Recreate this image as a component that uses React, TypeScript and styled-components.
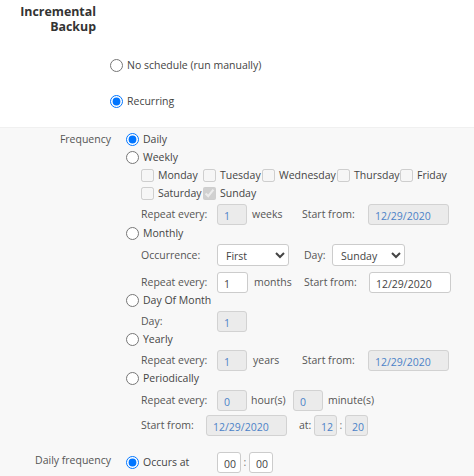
import styled, { createGlobalStyle } from "styled-components";

const GlobalStyle = createGlobalStyle`
  html, body {
    margin: 0;
    padding: 0;
    background: #ffffff;
  }
  body {
    font-family: "Open Sans", "Liberation Sans", sans-serif;
    font-size: 10.5px;
    color: #444444;
  }
`;

const Page = styled.div`
  width: 474px;
  height: 476px;
  overflow: hidden;
  display: flex;
  flex-direction: column;
`;

const TopSection = styled.div`
  height: 127px;
  display: flex;
  flex-direction: column;
`;

const Title = styled.div`
  width: 96px;
  padding-top: 4px;
  display: flex;
  flex-direction: column;
  align-items: flex-end;
  font-size: 12.4px;
  font-weight: 700;
  color: #333333;
`;

const TitleLine = styled.span`
  display: block;
  height: 15px;
  line-height: 15px;
`;

const TopOptions = styled.div`
  display: flex;
  flex-direction: column;
  gap: 18px;
  padding: 22px 0 0 110px;
`;

const GreySection = styled.div`
  flex: 1;
  background: #f8f8f8;
  border-top: 1px solid #f0f0f0;
  padding-top: 2px;
`;

const Grid = styled.div`
  display: grid;
  grid-template-columns: 111px 1fr;
  column-gap: 15px;
`;

const SideLabel = styled.div<{ $top?: number }>`
  text-align: right;
  color: #555555;
  line-height: 18px;
  margin-top: ${({ $top }) => $top ?? 0}px;
`;

const Column = styled.div<{ $top?: number }>`
  display: flex;
  flex-direction: column;
  margin-top: ${({ $top }) => $top ?? 0}px;
`;

const OptionRow = styled.label<{ $top?: number; $w?: number }>`
  display: flex;
  align-items: center;
  flex: none;
  height: 18px;
  gap: 4px;
  width: ${({ $w }) => ($w ? `${$w}px` : "auto")};
  margin-top: ${({ $top }) => $top ?? 0}px;
  white-space: nowrap;
`;

const Radio = styled.input.attrs({ type: "radio" })`
  width: 13px;
  height: 13px;
  margin: 0;
  accent-color: #0075ff;
`;

const DaysRow = styled.div`
  display: flex;
  align-items: center;
  height: 18px;
  padding-left: 15px;
`;

const DayItem = styled.label<{ $w: number }>`
  display: flex;
  align-items: center;
  gap: 4px;
  width: ${({ $w }) => $w}px;
  white-space: nowrap;
`;

const Check = styled.input.attrs({ type: "checkbox" })`
  width: 13px;
  height: 13px;
  margin: 0;
`;

const FieldRow = styled.div<{ $top?: number; $indent?: number }>`
  display: flex;
  align-items: center;
  height: 22px;
  padding-left: ${({ $indent }) => $indent ?? 15}px;
  margin-top: ${({ $top }) => $top ?? 0}px;
  white-space: nowrap;
`;

const Text = styled.span<{ $w?: number; $pad?: number }>`
  flex: none;
  box-sizing: border-box;
  width: ${({ $w }) => ($w ? `${$w}px` : "auto")};
  padding-left: ${({ $pad }) => $pad ?? 0}px;
  color: #555555;
`;

const Box = styled.input<{ $w: number }>`
  flex: none;
  box-sizing: border-box;
  width: ${({ $w }) => $w}px;
  height: 21px;
  margin: 0;
  padding: 3px 0 0 6px;
  font-family: inherit;
  font-size: 10.5px;
  color: #444444;
  background: #ffffff;
  border: 1px solid #cccccc;
  border-radius: 3px;
  outline: none;

  &:disabled {
    background: #ebebeb;
    color: #4b82c8;
    border-color: #d2d2d2;
  }
`;

const Select = styled.select<{ $w: number }>`
  flex: none;
  box-sizing: border-box;
  width: ${({ $w }) => $w}px;
  height: 22px;
  margin: 0;
  padding: 2px 4px 0 4px;
  font-family: inherit;
  font-size: 10.5px;
  color: #444444;
  background: #ffffff;
  border: 1px solid #cccccc;
  border-radius: 3px;
`;

const Colon = styled.span`
  flex: none;
  width: 8px;
  text-align: center;
  color: #777777;
`;

const weekDays: [string, number][] = [
  ["Monday", 62],
  ["Tuesday", 59],
  ["Wednesday", 75],
  ["Thursday", 63],
  ["Friday", 50],
];

export default function App() {
  return (
    <Page>
      <GlobalStyle />
      <TopSection>
        <Title>
          <TitleLine>Incremental</TitleLine>
          <TitleLine>Backup</TitleLine>
        </Title>
        <TopOptions>
          <OptionRow>
            <Radio name="mode" />
            No schedule (run manually)
          </OptionRow>
          <OptionRow>
            <Radio name="mode" defaultChecked />
            Recurring
          </OptionRow>
        </TopOptions>
      </TopSection>

      <GreySection>
        <Grid>
          <SideLabel>Frequency</SideLabel>
          <Column>
            <OptionRow>
              <Radio name="freq" defaultChecked />
              Daily
            </OptionRow>
            <OptionRow>
              <Radio name="freq" />
              Weekly
            </OptionRow>
            <DaysRow>
              {weekDays.map(([d, w]) => (
                <DayItem key={d} $w={w}>
                  <Check disabled />
                  {d}
                </DayItem>
              ))}
            </DaysRow>
            <DaysRow>
              <DayItem $w={62}>
                <Check disabled />
                Saturday
              </DayItem>
              <DayItem $w={59}>
                <Check disabled defaultChecked />
                Sunday
              </DayItem>
            </DaysRow>
            <FieldRow $top={1}>
              <Text $w={76}>Repeat every:</Text>
              <Box $w={30} disabled defaultValue="1" />
              <Text $w={55} $pad={5}>weeks</Text>
              <Text $w={66}>Start from:</Text>
              <Box $w={81} disabled defaultValue="12/29/2020" />
            </FieldRow>
            <OptionRow $top={-1}>
              <Radio name="freq" />
              Monthly
            </OptionRow>
            <FieldRow $top={2}>
              <Text $w={76}>Occurrence:</Text>
              <Select $w={72} defaultValue="First">
                <option>First</option>
                <option>Second</option>
                <option>Third</option>
                <option>Fourth</option>
                <option>Last</option>
              </Select>
              <Text $w={43} $pad={15}>Day:</Text>
              <Select $w={73} defaultValue="Sunday">
                <option>Sunday</option>
                <option>Monday</option>
                <option>Tuesday</option>
                <option>Wednesday</option>
                <option>Thursday</option>
                <option>Friday</option>
                <option>Saturday</option>
              </Select>
            </FieldRow>
            <FieldRow $top={5}>
              <Text $w={76}>Repeat every:</Text>
              <Box $w={31} defaultValue="1" />
              <Text $w={56} $pad={6}>months</Text>
              <Text $w={65}>Start from:</Text>
              <Box $w={82} defaultValue="12/29/2020" />
            </FieldRow>
            <OptionRow $top={-2}>
              <Radio name="freq" />
              Day Of Month
            </OptionRow>
            <FieldRow $top={1}>
              <Text $w={76}>Day:</Text>
              <Box $w={30} disabled defaultValue="1" />
            </FieldRow>
            <OptionRow $top={-2}>
              <Radio name="freq" />
              Yearly
            </OptionRow>
            <FieldRow $top={1}>
              <Text $w={76}>Repeat every:</Text>
              <Box $w={30} disabled defaultValue="1" />
              <Text $w={55} $pad={6}>years</Text>
              <Text $w={66}>Start from:</Text>
              <Box $w={81} disabled defaultValue="12/29/2020" />
            </FieldRow>
            <OptionRow $top={-2}>
              <Radio name="freq" />
              Periodically
            </OptionRow>
            <FieldRow $top={2}>
              <Text $w={76}>Repeat every:</Text>
              <Box $w={30} disabled defaultValue="0" />
              <Text $w={46} $pad={4}>hour(s)</Text>
              <Box $w={30} disabled defaultValue="0" />
              <Text $pad={5}>minute(s)</Text>
            </FieldRow>
            <FieldRow $top={3}>
              <Text $w={65}>Start from:</Text>
              <Box $w={81} disabled defaultValue="12/29/2020" />
              <Text $w={27} $pad={12}>at:</Text>
              <Box $w={23} disabled defaultValue="12" />
              <Colon>:</Colon>
              <Box $w={23} disabled defaultValue="20" />
            </FieldRow>
          </Column>

          <SideLabel $top={15}>Daily frequency</SideLabel>
          <Column $top={15}>
            <FieldRow $indent={0}>
              <OptionRow $w={91}>
                <Radio name="daily" defaultChecked />
                Occurs at
              </OptionRow>
              <Box $w={24} defaultValue="00" />
              <Colon>:</Colon>
              <Box $w={24} defaultValue="00" />
            </FieldRow>
          </Column>
        </Grid>
      </GreySection>
    </Page>
  );
}
